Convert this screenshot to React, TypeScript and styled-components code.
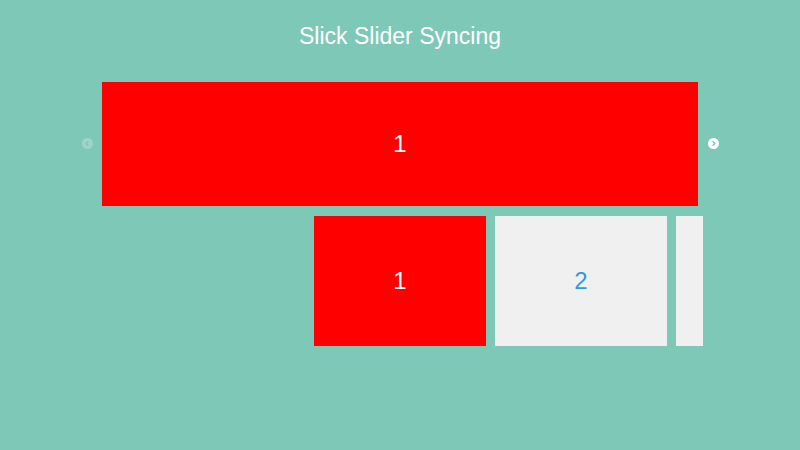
import React, { useState } from 'react';
import styled, { createGlobalStyle } from 'styled-components';

const slides = [1, 2, 3, 4, 5];

const App = (): JSX.Element => {
    const [current] = useState(0);

    return (
        <>
            <GlobalStyle />
            <Page>
                <Title>Slick Slider Syncing</Title>
                <MainRow>
                    <ArrowCell>
                        <Arrow disabled aria-label="Previous">
                            <svg width="7" height="7" viewBox="0 0 8 8">
                                <path d="M5 1.5 2.5 4 5 6.5" fill="none" stroke="#7ec8b8" strokeWidth="1.8" />
                            </svg>
                        </Arrow>
                    </ArrowCell>
                    <MainSlide active>{slides[current]}</MainSlide>
                    <ArrowCell>
                        <Arrow aria-label="Next">
                            <svg width="7" height="7" viewBox="0 0 8 8">
                                <path d="M3 1.5 5.5 4 3 6.5" fill="none" stroke="#7ec8b8" strokeWidth="1.8" />
                            </svg>
                        </Arrow>
                    </ArrowCell>
                </MainRow>
                <ThumbViewport>
                    <ThumbTrack>
                        {slides.map((n, i) => (
                            <Thumb key={n} active={i === current}>{n}</Thumb>
                        ))}
                    </ThumbTrack>
                </ThumbViewport>
            </Page>
        </>
    );
};

const GlobalStyle = createGlobalStyle`
    html, body {
        margin: 0;
        padding: 0;
        background: #7ec8b8;
        font-family: "Liberation Sans", Arial, sans-serif;
    }
`

const Page = styled.div`
    width: 800px;
    height: 450px;
    padding-top: 20px;
    box-sizing: border-box;
    overflow: hidden;
`

const Title = styled.h2`
    margin: 0 0 30px;
    text-align: center;
    font-size: 23px;
    font-weight: normal;
    line-height: 32px;
    color: #fff;
`

const MainRow = styled.div`
    display: flex;
    justify-content: center;
`

const ArrowCell = styled.div`
    width: 30px;
    padding-bottom: 2px;
    display: flex;
    align-items: center;
    justify-content: center;
`

const Arrow = styled.button`
    width: 11px;
    height: 11px;
    padding: 0;
    border: none;
    border-radius: 50%;
    background: #fff;
    display: flex;
    align-items: center;
    justify-content: center;
    cursor: pointer;
    &:disabled {
        opacity: 0.25;
        cursor: default;
    }
`

const MainSlide = styled.div<{ active?: boolean }>`
    width: 596px;
    height: 124px;
    display: flex;
    align-items: center;
    justify-content: center;
    background: ${p => (p.active ? '#ff0000' : '#f0f0f0')};
    color: ${p => (p.active ? '#fff' : '#3498db')};
    font-size: 24px;
`

const ThumbViewport = styled.div`
    margin: 10px 0 0 102px;
    width: 601px;
    overflow: hidden;
`

const ThumbTrack = styled.div`
    display: flex;
    gap: 9px;
    padding-left: 212px;
`

const Thumb = styled.div<{ active?: boolean }>`
    flex: 0 0 172px;
    height: 130px;
    display: flex;
    align-items: center;
    justify-content: center;
    background: ${p => (p.active ? '#ff0000' : '#f0f0f0')};
    color: ${p => (p.active ? '#fff' : '#3498db')};
    font-size: 24px;
`

export default App;
